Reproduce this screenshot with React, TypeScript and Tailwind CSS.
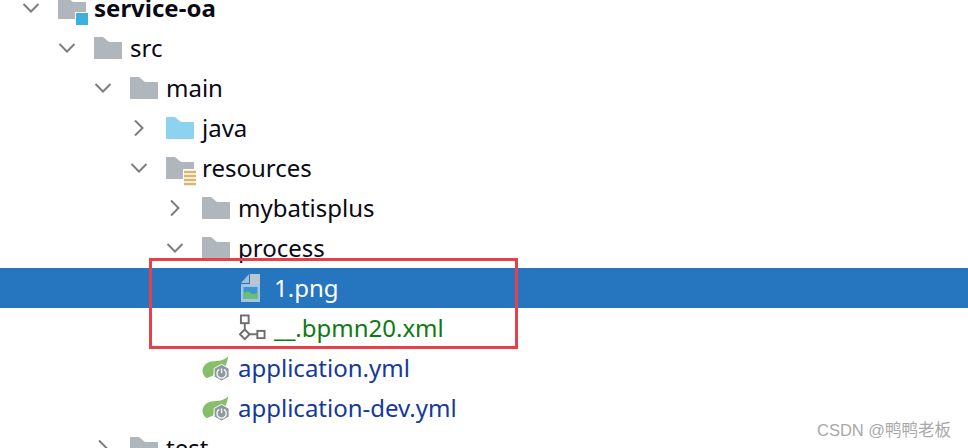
const Chevron = ({ open }: { open: boolean }) => (
  <svg width="18" height="18" viewBox="0 0 18 18" fill="none" stroke="#7d7d7d" strokeWidth="2">
    {open ? <path d="M1.5 5l7.5 7.5L16.500 5" /> : <path d="M5 1.500L12.500 9 5 16.500" />}
  </svg>
);

const Folder = ({ color = "#afb6bc" }: { color?: string }) => (
  <svg width="28" height="22" viewBox="0 0 28 22">
    <path d="M0 0H9l6 5h13v17H0z" fill={color} />
  </svg>
);

const ModuleFolder = () => (
  <div className="relative">
    <Folder />
    <div className="absolute left-[17px] top-[15px] h-[14px] w-[14px] border border-white bg-[#3cb1de]" />
  </div>
);

const ResourceFolder = () => (
  <div className="relative">
    <Folder />
    <svg className="absolute left-[17px] top-[12px]" width="14" height="17" viewBox="0 0 14 17">
      <rect x="0" y="0" width="14" height="17" fill="#fff" />
      <path d="M1 3h12M1 7h12M1 11h12M1 15h12" stroke="#d8b670" strokeWidth="2.500" />
    </svg>
  </div>
);

const PngIcon = () => (
  <svg className="ml-[2px]" width="21" height="28" viewBox="0 0 21 28">
    <path d="M9 0v9H1z" fill="#a6bdd6" />
    <path d="M10 0h10v11H10z" fill="#bcc6d0" />
    <path d="M1 10h19v18H1z" fill="#a3c4e2" />
    <path d="M3.500 13h14v12h-14z" fill="#3b95c9" />
    <path d="M3.500 25v-5c3-3 5-3 7-1s5 1 7-1v7z" fill="#6dbd78" />
  </svg>
);

const BpmnIcon = () => (
  <svg className="ml-px" width="28" height="28" viewBox="0 0 28 28" fill="none" stroke="#6e6e6e" strokeWidth="2">
    <rect x="2" y="1" width="8" height="8" />
    <path d="M6 9v6" />
    <path d="M6 15.500l5 5-5 5-5-5z" />
    <path d="M11 20.500h8" />
    <rect x="19" y="17" width="7.500" height="7.500" />
  </svg>
);

const SpringIcon = () => (
  <svg width="30" height="28" viewBox="0 0 30 28">
    <path d="M28 1c-.5 5-1.500 8-3 11L14 15l-2 7-7 3C1 22-1 17 2 12 6 6 14 7 20 6c4-1 7-3 8-5z" fill="#86bf6a" />
    <path d="M21 10l8 4.500v9L21 28l-8-4.500v-9z" fill="#8f989f" stroke="#fff" strokeWidth="1" />
    <path d="M18.500 15.500a5 5 0 1 0 5 0" fill="none" stroke="#f2f4f5" strokeWidth="1.500" />
    <path d="M21 14.500v5" stroke="#f2f4f5" strokeWidth="1.500" />
  </svg>
);

type Row = {
  label: string;
  indent: string;
  chevron?: "open" | "closed";
  icon: React.ReactNode;
  text?: string;
  selected?: boolean;
};

const rows: Row[] = [
  { label: "service-oa", indent: "pl-[22px]", chevron: "open", icon: <ModuleFolder />, text: "font-bold text-[#0a0a14]" },
  { label: "src", indent: "pl-[58px]", chevron: "open", icon: <Folder /> },
  { label: "main", indent: "pl-[94px]", chevron: "open", icon: <Folder /> },
  { label: "java", indent: "pl-[130px]", chevron: "closed", icon: <Folder color="#8dd3ef" /> },
  { label: "resources", indent: "pl-[130px]", chevron: "open", icon: <ResourceFolder /> },
  { label: "mybatisplus", indent: "pl-[166px]", chevron: "closed", icon: <Folder /> },
  { label: "process", indent: "pl-[166px]", chevron: "open", icon: <Folder /> },
  { label: "1.png", indent: "pl-[202px]", icon: <PngIcon />, text: "text-white", selected: true },
  { label: "__.bpmn20.xml", indent: "pl-[202px]", icon: <BpmnIcon />, text: "text-[#0f7a12]" },
  { label: "application.yml", indent: "pl-[166px]", icon: <SpringIcon />, text: "text-[#15389c]" },
  { label: "application-dev.yml", indent: "pl-[166px]", icon: <SpringIcon />, text: "text-[#15389c]" },
  { label: "test", indent: "pl-[94px]", chevron: "closed", icon: <Folder /> },
];

export default function App() {
  return (
    <div className="relative h-[448px] w-[968px] overflow-hidden bg-white font-['Noto_Sans','Open_Sans',sans-serif]">
      <div className="-mt-3 flex flex-col">
        {rows.map((row) => (
          <div key={row.label} className={`flex h-10 shrink-0 items-center ${row.indent} ${row.selected ? "bg-[#2675bf]" : ""}`}>
            <div className="flex w-[18px] shrink-0 justify-center">
              {row.chevron && <Chevron open={row.chevron === "open"} />}
            </div>
            <div className="ml-[18px] flex w-[28px] shrink-0 justify-start">{row.icon}</div>
            <span className={`ml-2 whitespace-nowrap text-[24px] leading-10 ${row.text ?? "text-[#0a0a14]"}`}>{row.label}</span>
          </div>
        ))}
      </div>

      <div className="absolute left-[149px] top-[258px] h-[91px] w-[369px] border-[3px] border-[#e8404a]" />

      <div className="absolute left-[817px] top-[418px] whitespace-nowrap font-['Liberation_Sans','Noto_Sans_CJK_SC',sans-serif] text-[16.500px] text-[#a8a8a8]">
        CSDN @鸭鸭老板
      </div>
    </div>
  );
}
